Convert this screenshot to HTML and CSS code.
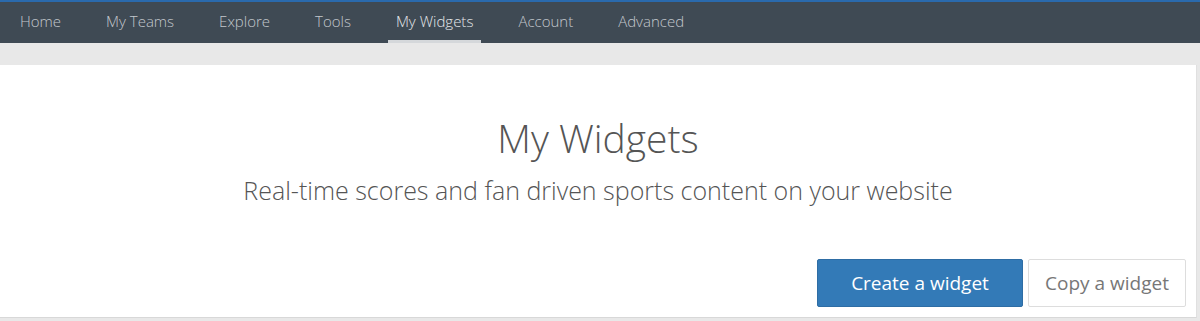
FILE: index.html
```html
<!DOCTYPE html>
<html>
<head>
<meta charset="utf-8">
<link rel="stylesheet" href="styles.css">
</head>
<body>
<nav class="topnav">
  <a class="nav-item">Home</a>
  <a class="nav-item">My Teams</a>
  <a class="nav-item">Explore</a>
  <a class="nav-item">Tools</a>
  <a class="nav-item active">My Widgets</a>
  <a class="nav-item">Account</a>
  <a class="nav-item">Advanced</a>
</nav>
<div class="band"></div>
<main class="card">
  <h1 class="title">My Widgets</h1>
  <p class="subtitle">Real-time scores and fan driven sports content on your website</p>
  <div class="actions">
    <button class="btn btn-primary">Create a widget</button>
    <button class="btn btn-default">Copy a widget</button>
  </div>
</main>
</body>
</html>
```
FILE: styles.css
```css
html, body {
  margin: 0;
  padding: 0;
  background: #e8e8e8;
  font-family: "Open Sans", "Liberation Sans", sans-serif;
}
.topnav {
  display: flex;
  align-items: stretch;
  height: 41px;
  background: #3f4a54;
  border-top: 2px solid #2a6aad;
  padding-left: 12px;
  gap: 29px;
}
.nav-item {
  display: flex;
  align-items: center;
  padding: 0 8px;
  color: #c3c8cd;
  font-size: 15px;
  font-weight: 300;
  text-decoration: none;
  border-bottom: 3px solid transparent;
}
.nav-item.active {
  color: #e4e7ea;
  border-bottom-color: #d5d8db;
}
.band {
  height: 22px;
}
.card {
  background: #fff;
  margin-right: 3px;
  height: 253px;
  border-right: 1px solid #e0e0e0;
  border-bottom: 1px solid #d8d8d8;
  display: flex;
  flex-direction: column;
  align-items: center;
  box-sizing: border-box;
}
.title {
  margin: 47px 0 0;
  font-weight: 300;
  font-size: 39px;
  line-height: 52px;
  color: #555;
}
.subtitle {
  margin: 9px 0 0;
  font-weight: 300;
  font-size: 25px;
  line-height: 34px;
  color: #555;
}
.actions {
  align-self: flex-end;
  display: flex;
  gap: 5px;
  margin-top: 52px;
  margin-right: 10px;
}
.btn {
  font-family: "Open Sans", "Liberation Sans", sans-serif;
  font-size: 19px;
  height: 48px;
  border-radius: 2px;
  padding: 0 10px;
  cursor: pointer;
}
.btn-primary {
  width: 206px;
  background: #337ab7;
  border: 1px solid #2e6da4;
  color: #fff;
}
.btn-default {
  width: 158px;
  background: #fff;
  border: 1px solid #ddd;
  color: #777;
}
```
